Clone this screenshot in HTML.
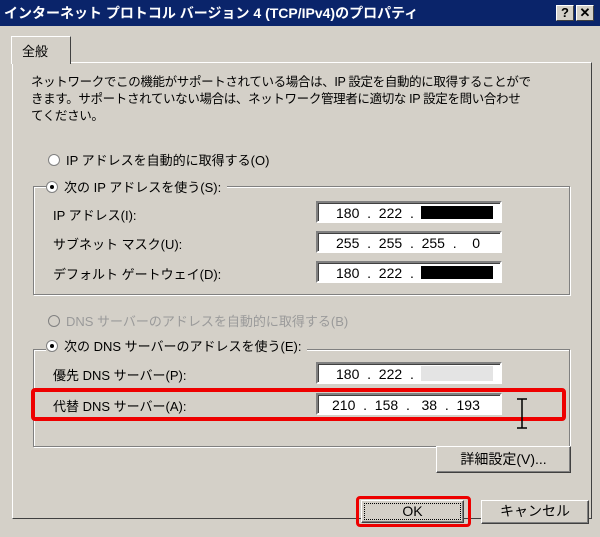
<!DOCTYPE html>
<html><head><meta charset="utf-8"><style>
*{margin:0;padding:0;box-sizing:border-box}
body{width:600px;height:537px;background:#d4d0c8;position:relative;overflow:hidden;font-family:"Liberation Sans","Noto Sans CJK JP",sans-serif;font-size:13px;color:#000}
.a{position:absolute;white-space:nowrap}
.title{left:0;top:0;width:600px;height:26px;background:#0a246a;color:#fff;font-size:14px;font-weight:bold;line-height:26px;padding-left:4px}
.tb{position:absolute;top:5px;width:18px;height:16px;background:#d4d0c8;border:1px solid;border-color:#fff #404040 #404040 #fff;color:#000;font-size:13px;font-weight:bold;line-height:14px;text-align:center}
.panel{left:12px;top:62px;width:580px;height:457px;border:1px solid;border-color:#fff #404040 #404040 #fff}
.tab{left:11px;top:36px;width:60px;height:28px;border:1px solid;border-color:#fff #404040 transparent #fff;border-bottom:none;background:#d4d0c8;padding:4px 0 0 10px}
.grp{border:1px solid #808080;box-shadow:1px 1px 0 #fff inset,1px 1px 0 #fff}
.in{width:186px;height:22px;background:#fff;border:2px solid;border-color:#808080 #fff #fff #808080;box-shadow:inset 1px 1px 0 #404040;font-size:14px;line-height:18px}
.in span{position:absolute;top:1px}
.rad{display:inline-block;width:12px;height:12px;border-radius:50%;background:#fff;border:1px solid #808080;vertical-align:-1px;margin-right:6px;position:relative}
.rad.on:after{content:"";position:absolute;left:3px;top:3px;width:4px;height:4px;border-radius:50%;background:#000}
.btn{background:#d4d0c8;border:1px solid;border-color:#fff #404040 #404040 #fff;box-shadow:inset -1px -1px 0 #808080;text-align:center;font-size:14px}
.red{border:4px solid #e00;border-radius:4px}
.blk{position:absolute;background:#000}
</style></head><body>
<div class="a title">インターネット プロトコル バージョン 4 (TCP/IPv4)のプロパティ</div>
<div class="tb" style="left:556px">?</div>
<div class="tb" style="left:576px">✕</div>
<div class="a panel"></div>
<div class="a tab">全般</div>
<div class="a" style="left:31px;top:74px;line-height:17px;font-size:12.5px;letter-spacing:-0.35px">ネットワークでこの機能がサポートされている場合は、IP 設定を自動的に取得することがで<br>きます。サポートされていない場合は、ネットワーク管理者に適切な IP 設定を問い合わせ<br>てください。</div>
<div class="a" style="left:48px;top:150px"><span class="rad"></span>IP アドレスを自動的に取得する(O)</div>

<div class="a grp" style="left:33px;top:186px;width:537px;height:109px"></div>
<div class="a" style="left:46px;top:177px;background:#d4d0c8;padding-right:6px"><span class="rad on"></span>次の IP アドレスを使う(S):</div>
<div class="a" style="left:53px;top:205px">IP アドレス(I):</div>
<div class="a" style="left:53px;top:234px">サブネット マスク(U):</div>
<div class="a" style="left:53px;top:264px">デフォルト ゲートウェイ(D):</div>
<div class="a in" style="left:316px;top:201px"><span style="left:18px">180 &nbsp;. &nbsp;222 &nbsp;.</span><div class="blk" style="left:103px;top:3px;width:72px;height:13px"></div></div>
<div class="a in" style="left:316px;top:231px"><span style="left:18px">255 &nbsp;. &nbsp;255 &nbsp;. &nbsp;255 &nbsp;. &nbsp;&nbsp;&nbsp;0</span></div>
<div class="a in" style="left:316px;top:261px"><span style="left:18px">180 &nbsp;. &nbsp;222 &nbsp;.</span><div class="blk" style="left:103px;top:3px;width:72px;height:13px"></div></div>

<div class="a" style="left:48px;top:311px;color:#9a9a9a"><span class="rad" style="background:#d4d0c8"></span>DNS サーバーのアドレスを自動的に取得する(B)</div>
<div class="a grp" style="left:33px;top:349px;width:537px;height:98px"></div>
<div class="a" style="left:46px;top:336px;background:#d4d0c8;padding-right:6px"><span class="rad on"></span>次の DNS サーバーのアドレスを使う(E):</div>
<div class="a" style="left:53px;top:365px">優先 DNS サーバー(P):</div>
<div class="a in" style="left:316px;top:362px"><span style="left:18px">180 &nbsp;. &nbsp;222 &nbsp;.</span><div class="blk" style="left:103px;top:2px;width:72px;height:15px;background:#e4e4e4"></div></div>
<div class="a red" style="left:31px;top:388px;width:535px;height:33px"></div>
<div class="a" style="left:53px;top:396px">代替 DNS サーバー(A):</div>
<div class="a in" style="left:316px;top:393px"><span style="left:14px">210 &nbsp;. &nbsp;158 &nbsp;. &nbsp;&nbsp;38 &nbsp;. &nbsp;193</span></div>
<svg class="a" style="left:514px;top:398px" width="16" height="32"><path d="M3 1h10M8 1v29M3 30h10" stroke="#000" stroke-width="1.5" fill="none"/></svg>
<div class="a btn" style="left:436px;top:446px;width:135px;height:27px;line-height:24px">詳細設定(V)...</div>
<div class="a btn" style="left:361px;top:500px;width:103px;height:23px;line-height:20px;outline:1px dotted #000;outline-offset:-4px">OK</div>
<div class="a red" style="left:356px;top:496px;width:115px;height:31px;border-width:3px"></div>
<div class="a btn" style="left:481px;top:500px;width:108px;height:24px;line-height:21px">キャンセル</div>
</body></html>
